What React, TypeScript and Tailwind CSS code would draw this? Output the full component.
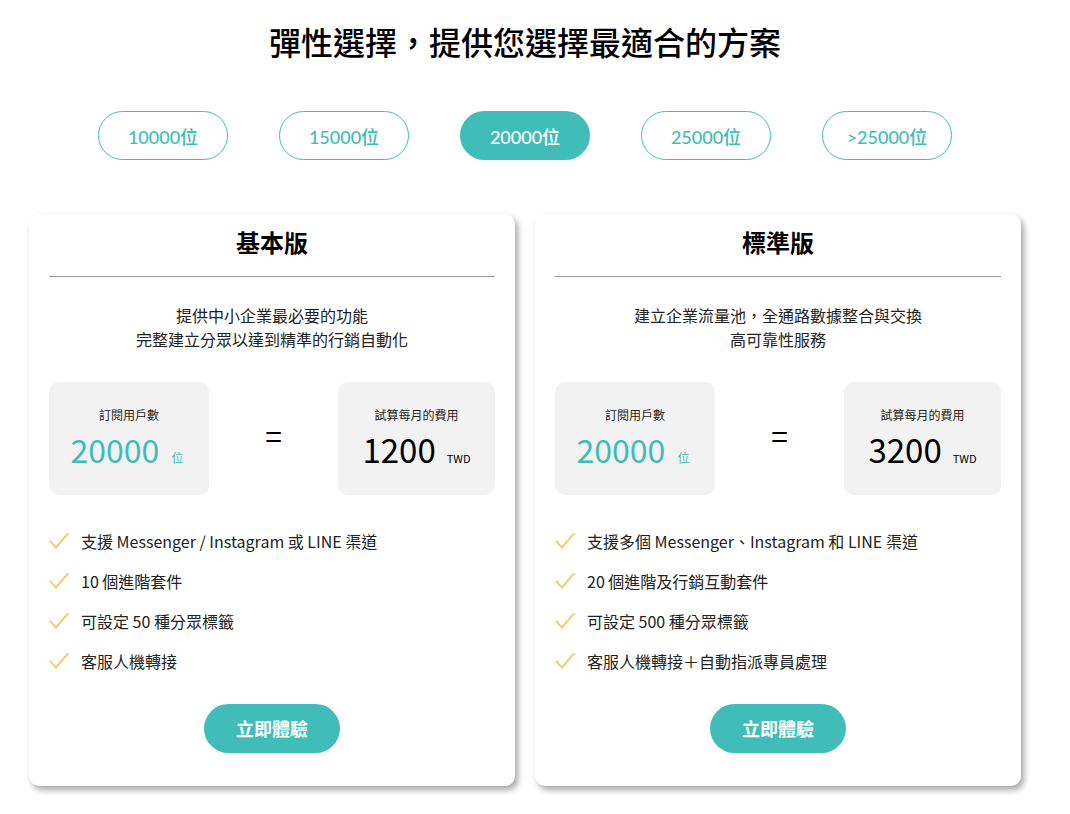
import React from "react";

const teal = "text-[#3fbcb8]";

function Check() {
  return (
    <svg width="20" height="18" viewBox="0 0 20 18" className="shrink-0">
      <path d="M1.5 9.5 L7 15.5 L18.5 2" fill="none" stroke="#f2c55c" strokeWidth="1.8" strokeLinecap="round" strokeLinejoin="round" />
    </svg>
  );
}

type Plan = {
  title: string;
  desc: string[];
  price: string;
  features: string[];
};

const plans: Plan[] = [
  {
    title: "基本版",
    desc: ["提供中小企業最必要的功能", "完整建立分眾以達到精準的行銷自動化"],
    price: "1200",
    features: ["支援 Messenger / Instagram 或 LINE 渠道", "10 個進階套件", "可設定 50 種分眾標籤", "客服人機轉接"],
  },
  {
    title: "標準版",
    desc: ["建立企業流量池，全通路數據整合與交換", "高可靠性服務"],
    price: "3200",
    features: ["支援多個 Messenger、Instagram 和 LINE 渠道", "20 個進階及行銷互動套件", "可設定 500 種分眾標籤", "客服人機轉接＋自動指派專員處理"],
  },
];

function Card({ p }: { p: Plan }) {
  return (
    <div className="w-[486px] h-[572px] bg-white rounded-[10px] shadow-[3px_4px_6px_rgba(0,0,0,0.35)] px-5 pt-[11px] flex flex-col">
      <div className="text-center text-[24px] font-bold text-black leading-[34px]">{p.title}</div>
      <div className="mt-[17px] h-px bg-[#9a9a9a]" />
      <div className="mt-[26px] text-center text-[16px] leading-[24px] text-[#222]">
        {p.desc.map((d) => (
          <div key={d}>{d}</div>
        ))}
      </div>
      <div className="mt-[31px] flex items-center justify-between">
        <div className="w-[160px] h-[113px] bg-[#f2f2f2] rounded-[10px] flex flex-col items-center pt-[24px]">
          <div className="text-[12px] leading-[18px] text-[#222]">訂閱用戶數</div>
          <div className={`flex items-baseline ${teal} mt-[5px] pr-[4px]`}>
            <span className="text-[32px] leading-[40px]">20000</span>
            <span className="text-[12px] ml-[12px]">位</span>
          </div>
        </div>
        <div className="text-[30px] leading-none text-black pb-[8px]">=</div>
        <div className="w-[157px] h-[113px] bg-[#f2f2f2] rounded-[10px] flex flex-col items-center pt-[24px]">
          <div className="text-[12px] leading-[18px] text-[#222]">試算每月的費用</div>
          <div className="flex items-baseline text-black mt-[5px]">
            <span className="text-[33px] leading-[40px]">{p.price}</span>
            <span className="text-[11px] ml-[11px]">TWD</span>
          </div>
        </div>
      </div>
      <div className="mt-[34px] flex flex-col gap-[16px]">
        {p.features.map((f) => (
          <div key={f} className="flex items-center h-[24px]">
            <Check />
            <span className="ml-[12px] text-[16px] text-[#222] leading-[24px]">{f}</span>
          </div>
        ))}
      </div>
      <div className="mt-auto mb-[33px] flex justify-center">
        <button className="w-[136px] h-[49px] rounded-full bg-[#40bdb9] text-white text-[18px] font-bold">立即體驗</button>
      </div>
    </div>
  );
}

export default function App() {
  const opts = ["10000位", "15000位", "20000位", "25000位", ">25000位"];
  return (
    <div
      className="w-[1050px] bg-white min-h-[814px] pt-[18px]"
      style={{ fontFamily: '"Noto Sans CJK TC", "Noto Sans", sans-serif' }}
    >
      <h1 className="text-center text-[32px] font-medium leading-[46px] text-black">彈性選擇，提供您選擇最適合的方案</h1>
      <div className="mt-[47px] flex justify-center gap-[51px]">
        {opts.map((o, i) => (
          <div
            key={o}
            className={
              i === 2
                ? "w-[130px] h-[49px] pt-[4px] rounded-full bg-[#40bdb9] text-white text-[18px] font-medium flex items-center justify-center font-['Lato','Noto_Sans_CJK_TC',sans-serif]"
                : "w-[130px] h-[49px] pt-[4px] rounded-full border border-[#40bdb9] text-[#3fbcb8] text-[18px] font-medium flex items-center justify-center font-['Lato','Noto_Sans_CJK_TC',sans-serif]"
            }
          >
            {o}
          </div>
        ))}
      </div>
      <div className="mt-[54px] flex justify-center gap-[20px]">
        {plans.map((p) => (
          <Card key={p.title} p={p} />
        ))}
      </div>
    </div>
  );
}
